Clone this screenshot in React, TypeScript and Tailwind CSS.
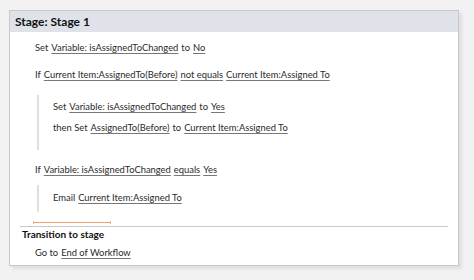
const L = ({ children }: { children: React.ReactNode }) => (
  <span className="underline decoration-[#777] underline-offset-2">{children}</span>
);

export default function App() {
  return (
    <div className="w-[474px] h-[280px] bg-[#f2f2f2] pt-[10px] pl-[9px] text-[#2a2a2a] font-['Lato',sans-serif] text-[9.4px]">
      <div className="w-[450px] h-[256px] bg-white border border-[#c9c9c9] shadow-[3px_3px_3px_rgba(0,0,0,0.08)] flex flex-col">
        <div className="h-[21px] shrink-0 bg-[#dfe3e9] flex items-center pl-[5px] text-[12px] font-bold text-[#111]">
          Stage: Stage 1
        </div>
        <div className="flex flex-col pl-[25px] pt-[5px]">
          <div className="h-[22px] flex items-center gap-[3px]">
            Set <L>Variable: isAssignedToChanged</L> to <L>No</L>
          </div>
          <div className="h-[22px] flex items-center gap-[3px] mt-[5px]">
            If <L>Current Item:AssignedTo(Before)</L> <L>not equals</L> <L>Current Item:Assigned To</L>
          </div>
          <div className="ml-[2px] mt-[9px] border-l-2 border-[#e0e0e0] h-[55px] pl-[14px] pt-[2px] flex flex-col gap-[1px]">
            <div className="h-[20px] flex items-center gap-[3px]">
              Set <L>Variable: isAssignedToChanged</L> to <L>Yes</L>
            </div>
            <div className="h-[20px] flex items-center gap-[3px]">
              then Set <L>AssignedTo(Before)</L> to <L>Current Item:Assigned To</L>
            </div>
          </div>
          <div className="h-[22px] flex items-center gap-[3px] mt-[9px]">
            If <L>Variable: isAssignedToChanged</L> <L>equals</L> <L>Yes</L>
          </div>
          <div className="ml-[2px] mt-[4px] border-l-2 border-[#e0e0e0] h-[27px] pl-[14px] flex items-center gap-[3px]">
            Email <L>Current Item:Assigned To</L>
          </div>
          <div className="relative mt-[9px] ml-[-2px] w-[78px] h-[3px] border-x border-[#f3b088]">
            <div className="absolute left-0 right-0 top-[1px] h-px bg-[#f0a070]" />
          </div>
        </div>
        <div className="mx-[10px] mt-[2px] border-t border-[#c8c8c8]" />
        <div className="h-[14px] pl-[12px] flex items-center text-[10px] font-bold text-[#111]">Transition to stage</div>
        <div className="h-[20px] mt-[2px] pl-[25px] flex items-center gap-[3px]">
          Go to <L>End of Workflow</L>
        </div>
      </div>
    </div>
  );
}
